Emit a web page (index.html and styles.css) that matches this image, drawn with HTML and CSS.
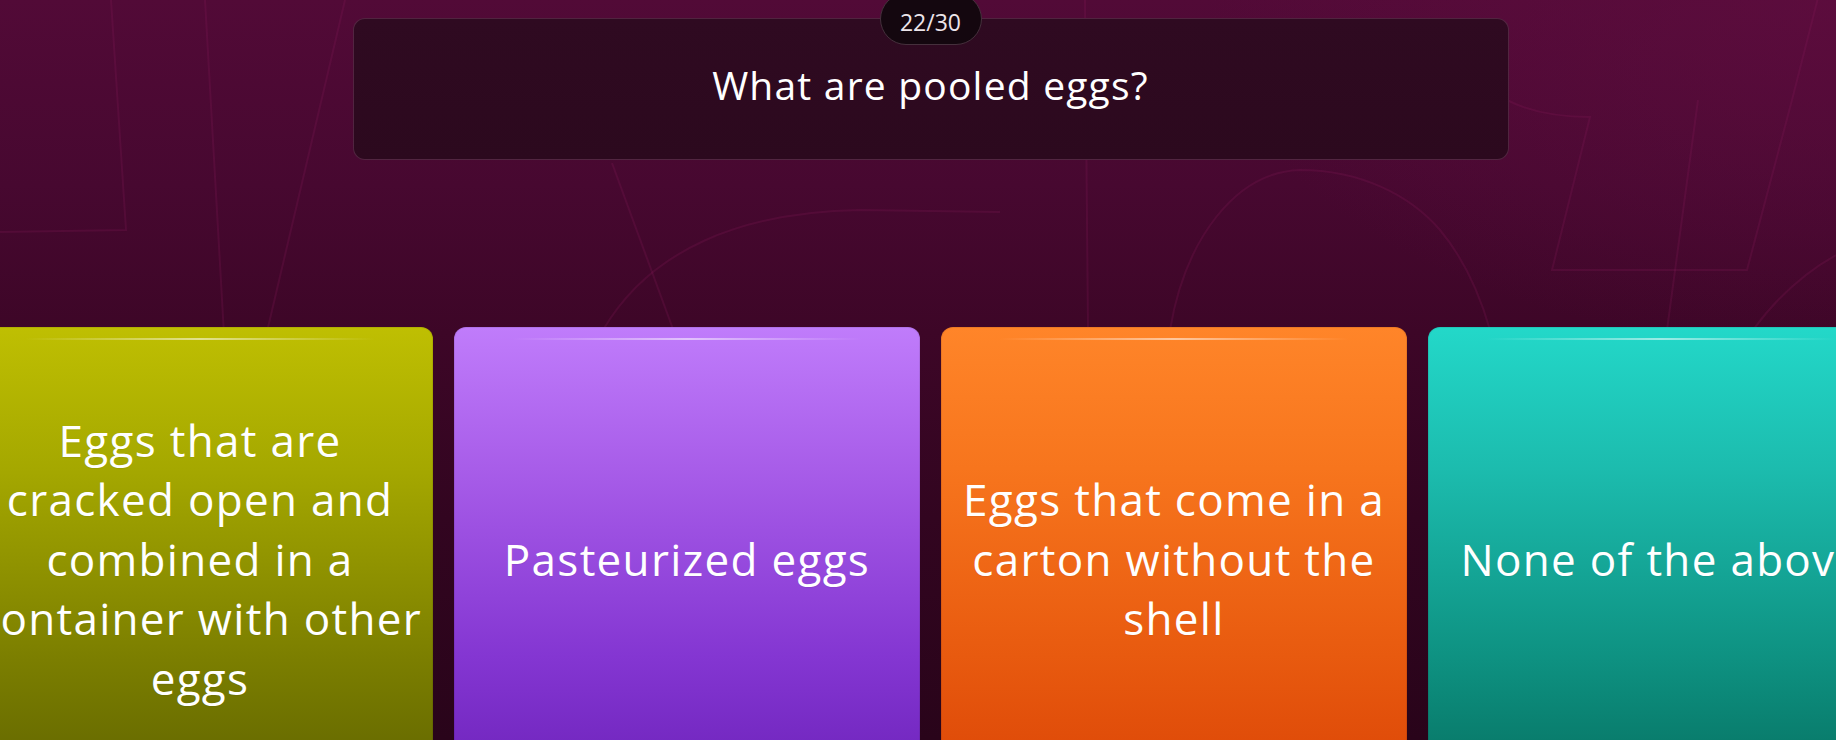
FILE: index.html
```html
<!DOCTYPE html>
<html lang="en">
<head>
<meta charset="utf-8">
<title>Quiz – What are pooled eggs?</title>
<link rel="stylesheet" href="styles.css">
</head>
<body>
<div class="backdrop" aria-hidden="true">
  <svg class="deco" width="1836" height="740" viewBox="0 0 1836 740">
    <g fill="none" stroke="#8a1c5c" stroke-opacity="0.22" stroke-width="2">
      <path d="M111 0 L126 230 L0 232"/>
      <path d="M205 0 L226 370 L232 740"/>
      <path d="M345 0 L258 370 L250 420"/>
      <path d="M612 163 L688 370"/>
      <path d="M603 330 C 650 250, 740 212, 860 210 L1000 212"/>
      <path d="M1085 0 L1088 330"/>
      <path d="M1170 330 C 1185 240, 1235 172, 1300 170 C 1360 170, 1410 195, 1440 230 C 1465 260, 1480 295, 1490 330"/>
      <path d="M1507 100 C 1530 112, 1560 117, 1590 117 L1552 270 L1747 270 L1792 100 L1820 -10"/>
      <path d="M1698 100 L1667 330"/>
      <path d="M1753 330 C 1775 300, 1800 275, 1836 255"/>
    </g>
  </svg>
</div>
<main class="stage">
  <section class="question">
    <div class="counter">22/30</div>
    <h1 class="question-text">What are pooled eggs?</h1>
  </section>
  <div class="answers">
    <button class="answer answer-yellow"><span>Eggs that are cracked open and combined in a container with other eggs</span></button>
    <button class="answer answer-purple"><span>Pasteurized eggs</span></button>
    <button class="answer answer-orange"><span>Eggs that come in a carton without the shell</span></button>
    <button class="answer answer-teal"><span>None of the above</span></button>
  </div>
</main>
</body>
</html>
```
FILE: styles.css
```css
html, body {
  margin: 0;
  padding: 0;
  width: 1836px;
  height: 740px;
  overflow: hidden;
}

body {
  position: relative;
  font-family: "Open Sans", "Noto Sans", sans-serif;
  color: #ffffff;
  background:
    radial-gradient(ellipse 900px 500px at 100% 0%, rgba(100, 14, 66, 0.55), rgba(100, 14, 66, 0) 70%),
    linear-gradient(180deg, #520a37 0%, #470830 25%, #3d0627 45%, #320520 70%, #29041a 100%);
}

.backdrop {
  position: absolute;
  inset: 0;
  pointer-events: none;
}

.deco {
  display: block;
}

.stage {
  position: relative;
  width: 1927px;
  margin-left: -33px;
  padding-top: 18px;
  display: flex;
  flex-direction: column;
  align-items: center;
}

.question {
  position: relative;
  box-sizing: border-box;
  width: 1156px;
  height: 142px;
  margin: 0 0 167px;
  padding-bottom: 9px;
  display: flex;
  align-items: center;
  justify-content: center;
  background: linear-gradient(180deg, #2f0a21 0%, #2c091e 100%);
  border: 1px solid rgba(150, 90, 125, 0.35);
  border-radius: 12px;
}

.counter {
  position: absolute;
  top: -26px;
  left: 50%;
  transform: translateX(-50%);
  box-sizing: border-box;
  width: 102px;
  height: 52px;
  padding-top: 5px;
  display: flex;
  align-items: center;
  justify-content: center;
  background: #14070f;
  border: 1px solid #45303c;
  border-radius: 26px;
  font-size: 23px;
  color: #ece4ea;
}

.question-text {
  margin: 0;
  font-size: 39px;
  font-weight: 400;
  letter-spacing: 1.2px;
  line-height: normal;
}

.answers {
  display: grid;
  grid-template-columns: repeat(4, 466px);
  column-gap: 21px;
}

.answer {
  position: relative;
  box-sizing: border-box;
  height: 470px;
  padding: 0 6px 5px;
  display: flex;
  align-items: center;
  justify-content: center;
  border: 0;
  border-radius: 12px;
  font-family: inherit;
  font-size: 44px;
  font-weight: 400;
  letter-spacing: 1.3px;
  line-height: 59.4px;
  color: #ffffff;
  text-align: center;
  box-shadow: inset 0 0 0 1px rgba(0, 0, 0, 0.08);
}

.answer::before {
  content: "";
  position: absolute;
  top: 11px;
  left: 58px;
  right: 58px;
  height: 2px;
  background: linear-gradient(90deg, rgba(255, 255, 255, 0), rgba(255, 255, 255, 0.55) 50%, rgba(255, 255, 255, 0));
}

.answer span {
  text-shadow: 0 1px 1px rgba(0, 0, 0, 0.06);
}

.answer-yellow {
  background: linear-gradient(180deg, #bfbf02 0%, #a5a800 30%, #7c7f00 70%, #5f6300 100%);
}

.answer-purple {
  background: linear-gradient(180deg, #c07cfb 0%, #a85de9 30%, #8436d2 70%, #6b21b8 100%);
}

.answer-orange {
  background: linear-gradient(180deg, #ff8529 0%, #f7751d 30%, #e85a0f 70%, #db4406 100%);
}

.answer-teal {
  background: linear-gradient(180deg, #23d8c9 0%, #1cbcae 30%, #0e9282 70%, #066f5f 100%);
}
```
